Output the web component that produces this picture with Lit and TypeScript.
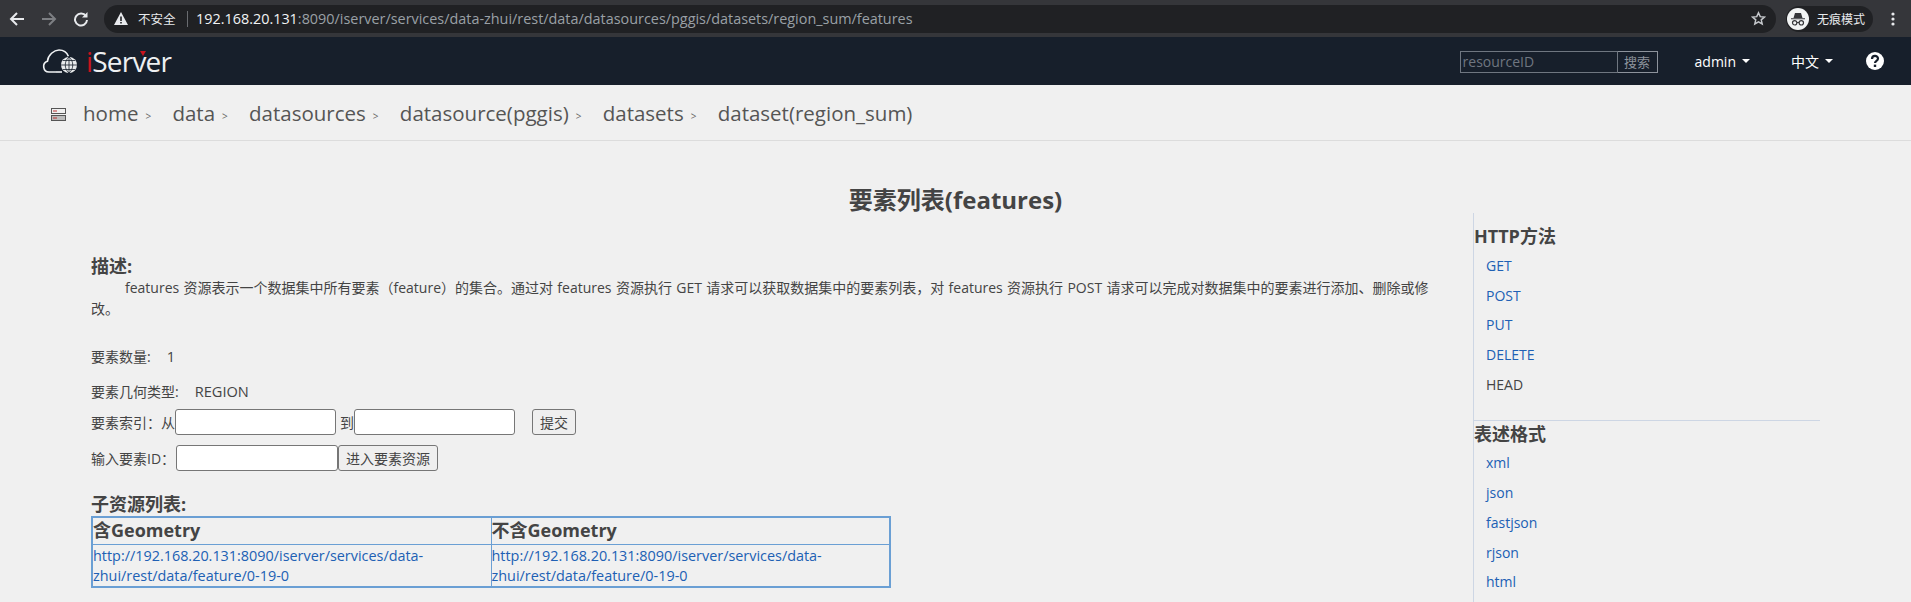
import { LitElement, html, css } from "lit";
import { customElement } from "lit/decorators.js";

const URLTEXT = "http://192.168.20.131:8090/iserver/services/data-zhui/rest/data/feature/0-19-0";

@customElement("app-root")
export class AppRoot extends LitElement {
  static styles = css`
    :host {
      display: block;
      height: 602px;
      overflow: hidden;
      background: #f0f0f0;
      color: #444;
      font-family: "Open Sans", "Noto Sans CJK SC", sans-serif;
      font-size: 14px;
    }
    a { color: #2060b4; text-decoration: none; }
    svg { display: block; flex: none; }

    .chrome { height: 37px; background: #35363a; display: flex; align-items: center; box-sizing: border-box; }
    .nav-btns { width: 104px; flex: none; display: flex; align-items: center; padding-left: 9px; box-sizing: border-box; gap: 16px; }
    .omni {
      width: 1672px; height: 28px; background: #202124; border-radius: 14px; flex: none;
      display: flex; align-items: center; padding-left: 10px; box-sizing: border-box; color: #fff;
    }
    .insecure { font-size: 12.5px; color: #e8eaed; margin-left: 10px; width: 42px; white-space: nowrap; }
    .omni-div { width: 1px; height: 16px; background: #6a6c70; margin: 0 8px 0 7px; }
    .url { font-size: 14.4px; color: #9aa0a6; white-space: nowrap; width: 730px; }
    .url b { font-weight: 400; color: #f1f3f4; }
    .star { margin-left: auto; margin-right: 10px; }
    .incog {
      margin-left: 10px; width: 87px; height: 26px; background: #202124; border-radius: 13px; flex: none;
      display: flex; align-items: center; gap: 8px; color: #e8eaed; font-size: 12px; box-sizing: border-box; padding-left: 1px;
    }
    .avatar { width: 22px; height: 22px; border-radius: 50%; background: #f1f3f4; display: flex; align-items: center; justify-content: center; }
    .dots { margin-left: 18px; }

    .nav { height: 48px; background: #171f2b; display: flex; align-items: center; box-sizing: border-box; }
    .logo { display: flex; align-items: center; margin-left: 42px; }
    .logo-t { font-size: 28px; color: #eef0f2; margin-left: 4px; letter-spacing: -0.8px; line-height: 30px; position: relative; font-family: "Open Sans", sans-serif; }
    .logo-t i { font-style: normal; color: #c8141e; }
    .logo-t u { position: absolute; left: 54px; top: 5px; width: 0; height: 0; border-left: 3.5px solid transparent; border-right: 3.5px solid transparent; border-top: 5px solid #c8141e; }
    .search { margin-left: auto; display: flex; align-items: stretch; height: 22px; margin-top: 1px; }
    .sinput { width: 158px; border: 1px solid #6f7680; box-sizing: border-box; color: #6f7680; font-size: 14px; line-height: 20px; padding-left: 2px; }
    .sbtn { width: 40px; border: 1px solid #8d939c; border-left: 0; box-sizing: border-box; color: #8d939c; font-size: 13px; line-height: 20px; text-align: center; }
    .menu { color: #fff; font-size: 14px; display: flex; align-items: center; gap: 6px; }
    .caret { width: 0; height: 0; border-left: 4px solid transparent; border-right: 4px solid transparent; border-top: 4px solid #fff; }
    .m1 { margin-left: 37px; }
    .m2 { margin-left: 41px; }
    .help { margin: 0 27px 0 33px; }

    .crumbs { height: 56px; border-bottom: 1px solid #dcdcdc; box-sizing: border-box; display: flex; align-items: center; padding-left: 50px; font-size: 20.5px; color: #555; }
    .crumbs .ico { margin: 3px 16px 0 0; }
    .crumb { display: flex; align-items: center; white-space: nowrap; }
    .gt { font-size: 10px; margin: 6px 21px 0 7px; color: #666; width: 6px; }
    .gt.none { display: none; }

    .title { height: 72px; padding-top: 43px; box-sizing: border-box; margin: 0; text-align: center; font-size: 24px; font-weight: 700; line-height: 32px; color: #444; }
    .cols { display: flex; }
    .main { width: 1382px; margin-left: 91px; flex: none; }
    h3 { margin: 0; font-size: 18px; line-height: 24px; font-weight: 700; color: #444; }
    .desc-h { margin-top: 41px; }
    .desc { margin: 0; text-indent: 34px; line-height: 20.5px; width: 1340px; word-spacing: .7px; }
    .line { line-height: 21px; white-space: nowrap; }
    .count { margin-top: 27px; }
    .geom { margin-top: 14px; }
    .gap { display: inline-block; width: 16px; }
    .val { font-size: 14.6px; }
    .frow { display: flex; align-items: center; height: 26px; white-space: nowrap; }
    .r1 { margin-top: 7px; }
    .r2 { margin-top: 10px; }
    .inp { height: 26px; width: 161px; background: #fff; border: 1px solid #767676; border-radius: 3px; box-sizing: border-box; flex: none; }
    .btn { height: 26px; background: #efefef; border: 1px solid #767676; border-radius: 3px; box-sizing: border-box; font-size: 14px; display: flex; align-items: center; justify-content: center; color: #444; flex: none; }
    .lab1 { width: 84px; }
    .to { width: 18px; padding-left: 4px; box-sizing: border-box; }
    .sub { width: 44px; margin-left: 17px; }
    .lab2 { width: 85px; }
    .wide { width: 162px; }
    .enter { width: 100px; }
    .sub-h { margin-top: 21px; }
    table { border-collapse: collapse; width: 800px; table-layout: fixed; border: 2px solid #6a9fd4; }
    td, th { border: 1px solid #6a9fd4; padding: 0; text-align: left; vertical-align: middle; }
    th { font-size: 18px; font-weight: 700; height: 25px; line-height: 23px; color: #444; padding-bottom: 1px; }
    td { line-height: 20px; font-size: 14.4px; height: 41px; }

    .side { width: 347px; border-left: 1px solid #cdd6e4; height: 389px; box-sizing: border-box; flex: none; }
    .side h3 { line-height: 24px; }
    .side .h1 { margin-top: 11px; }
    .side .h2 { margin-top: 1px; }
    .side ul { list-style: none; margin: 3px 0 0; padding: 0 0 0 12px; }
    .side .u2 { margin-top: 2px; }
    .side li { height: 29.7px; line-height: 29.7px; }
    .side hr { border: 0; border-top: 1px solid #cdd6e4; margin: 21px 0 0; }
  `;

  render() {
    const crumbs = ["home", "data", "datasources", "datasource(pggis)", "datasets", "dataset(region_sum)"];
    return html`
      <div class="chrome">
        <div class="nav-btns">
          <svg width="16" height="16" viewBox="0 0 16 16" fill="none" stroke="#e8eaed" stroke-width="2"><path d="M15 8H2M8 2 2 8l6 6"/></svg>
          <svg width="16" height="16" viewBox="0 0 16 16" fill="none" stroke="#7d7f83" stroke-width="2"><path d="M1 8h13M8 2l6 6-6 6"/></svg>
          <svg width="16" height="16" viewBox="0 0 16 16" fill="none" stroke="#e8eaed" stroke-width="2"><path d="M13 5.2A6 6 0 1 0 14 9"/><path d="M14.5 1v5.5H9" fill="#e8eaed" stroke="none"/></svg>
        </div>
        <div class="omni">
          <svg width="14" height="13" viewBox="0 0 14 13"><path d="M7 0 14 13H0Z" fill="#e8eaed"/><path d="M6.2 4.5h1.6v4.5H6.2zM6.2 10h1.6v1.5H6.2z" fill="#202124"/></svg>
          <span class="insecure">不安全</span>
          <span class="omni-div"></span>
          <span class="url"><b>192.168.20.131</b>:8090/iserver/services/data-zhui/rest/data/datasources/pggis/datasets/region_sum/features</span>
          <svg class="star" width="15" height="15" viewBox="0 0 24 24" fill="none" stroke="#c4c7cb" stroke-width="2.4"><path d="M12 3l2.8 6 6.6.7-5 4.4 1.5 6.5-5.9-3.4-5.9 3.4 1.5-6.5-5-4.4 6.6-.7z"/></svg>
        </div>
        <div class="incog">
          <span class="avatar"><svg width="16" height="14" viewBox="0 0 16 14"><path d="M3.5 6 5 1h6l1.5 5zM1 6.3h14v1H1z" fill="#35363a"/><circle cx="4.7" cy="10.8" r="2.2" fill="none" stroke="#35363a" stroke-width="1.2"/><circle cx="11.3" cy="10.8" r="2.2" fill="none" stroke="#35363a" stroke-width="1.2"/><path d="M6.9 10.5h2.2" stroke="#35363a"/></svg></span>
          <span>无痕模式</span>
        </div>
        <svg class="dots" width="4" height="14" viewBox="0 0 4 14" fill="#e8eaed"><circle cx="2" cy="2" r="1.6"/><circle cx="2" cy="7" r="1.6"/><circle cx="2" cy="12" r="1.6"/></svg>
      </div>

      <div class="nav">
        <div class="logo">
          <svg width="40" height="28" viewBox="0 0 40 28" fill="none">
            <path d="M14 25H7a5.5 5.5 0 0 1-1.6-10.7C6 8 12 3 17 3c4.5 0 8 2.6 9.4 6.3" stroke="#f0f2f4" stroke-width="1.6"/>
            <path d="M14 25h6" stroke="#f0f2f4" stroke-width="1.6"/>
            <circle cx="27" cy="18" r="8" fill="#e8eaec"/>
            <path d="M19 18h16M27 10v16M21 13.5h12M21 22.5h12M27 10c-5 4-5 12 0 16M27 10c5 4 5 12 0 16" stroke="#171f2b" stroke-width=".8"/>
          </svg>
          <span class="logo-t"><i>i</i>Server<u></u></span>
        </div>
        <div class="search"><span class="sinput">resourceID</span><span class="sbtn">搜索</span></div>
        <div class="menu m1">admin<span class="caret"></span></div>
        <div class="menu m2">中文<span class="caret"></span></div>
        <svg class="help" width="18" height="18" viewBox="0 0 18 18"><circle cx="9" cy="9" r="9" fill="#fff"/><path d="M6 7c0-4 6-4 6-.4 0 2.3-3 2.2-3 4.4" fill="none" stroke="#171f2b" stroke-width="2.2"/><rect x="7.8" y="12.6" width="2.4" height="2.4" fill="#171f2b"/></svg>
      </div>

      <div class="crumbs">
        <svg class="ico" width="17" height="13" viewBox="0 0 17 13" fill="none" stroke="#555"><rect x="1.5" y=".5" width="14" height="5"/><rect x="1.5" y="7.5" width="14" height="5" fill="#bbb"/><path d="M3 3h4M3 10h4" stroke="#b33"/></svg>
        ${crumbs.map((c, i) => html`<span class="crumb">${c}<span class="gt ${i === crumbs.length - 1 ? "none" : ""}">&gt;</span></span>`)}
      </div>

      <h1 class="title">要素列表(features)</h1>

      <div class="cols">
        <div class="main">
          <h3 class="desc-h">描述:</h3>
          <p class="desc">features 资源表示一个数据集中所有要素（feature）的集合。通过对 features 资源执行 GET 请求可以获取数据集中的要素列表，对 features 资源执行 POST 请求可以完成对数据集中的要素进行添加、删除或修改。</p>
          <div class="line count">要素数量:<span class="gap"></span><span class="val">1</span></div>
          <div class="line geom">要素几何类型:<span class="gap"></span><span class="val">REGION</span></div>
          <div class="frow r1"><span class="lab1">要素索引：从</span><span class="inp"></span><span class="to">到</span><span class="inp"></span><span class="btn sub">提交</span></div>
          <div class="frow r2"><span class="lab2">输入要素ID：</span><span class="inp wide"></span><span class="btn enter">进入要素资源</span></div>
          <h3 class="sub-h">子资源列表:</h3>
          <table>
            <tr><th>含Geometry</th><th>不含Geometry</th></tr>
            <tr><td><a href="#">${URLTEXT}</a></td><td><a href="#">${URLTEXT}</a></td></tr>
          </table>
        </div>
        <div class="side">
          <h3 class="h1">HTTP方法</h3>
          <ul>
            <li><a href="#">GET</a></li>
            <li><a href="#">POST</a></li>
            <li><a href="#">PUT</a></li>
            <li><a href="#">DELETE</a></li>
            <li>HEAD</li>
          </ul>
          <hr />
          <h3 class="h2">表述格式</h3>
          <ul class="u2">
            <li><a href="#">xml</a></li>
            <li><a href="#">json</a></li>
            <li><a href="#">fastjson</a></li>
            <li><a href="#">rjson</a></li>
            <li><a href="#">html</a></li>
          </ul>
        </div>
      </div>
    `;
  }
}
